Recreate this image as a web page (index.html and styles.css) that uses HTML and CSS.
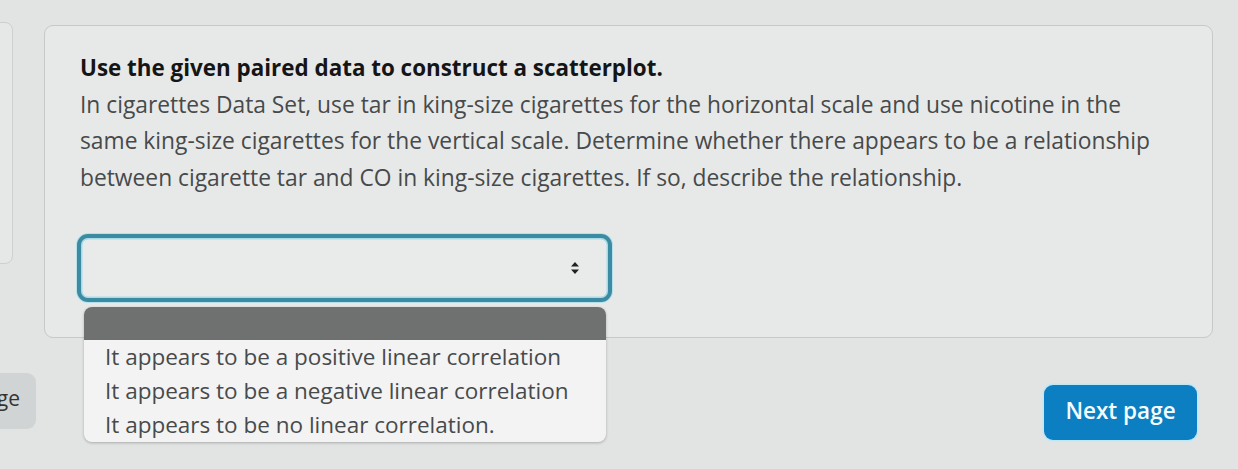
FILE: index.html
```html
<!DOCTYPE html>
<html lang="en">
<head>
<meta charset="utf-8">
<title>Scatterplot question</title>
<link rel="stylesheet" href="styles.css">
</head>
<body>
<div class="page">
  <aside class="side">
    <div class="side-panel"></div>
    <button class="side-btn" type="button">ge</button>
  </aside>
  <main class="main">
    <section class="card">
      <p class="title">Use the given paired data to construct a scatterplot.</p>
      <p class="body">In cigarettes Data Set, use tar in king-size cigarettes for the horizontal scale and use nicotine in the same king-size cigarettes for the vertical scale. Determine whether there appears to be a relationship between cigarette tar and CO in king-size cigarettes. If so, describe the relationship.</p>
      <div class="select-wrap">
        <div class="select">
          <svg class="arrows" width="10" height="14" viewBox="0 0 10 14"><path d="M5 1 L9 5.5 H1 Z M5 13 L9 8.5 H1 Z" fill="#222"/></svg>
        </div>
        <div class="menu">
          <div class="menu-head"></div>
          <ul class="options">
            <li>It appears to be a positive linear correlation</li>
            <li>It appears to be a negative linear correlation</li>
            <li>It appears to be no linear correlation.</li>
          </ul>
        </div>
      </div>
    </section>
    <div class="actions">
      <button class="next" type="button">Next page</button>
    </div>
  </main>
</div>
</body>
</html>
```
FILE: styles.css
```css
html, body {
  margin: 0;
  padding: 0;
}
body {
  background: #e2e4e3;
  font-family: "Open Sans", "Noto Sans", sans-serif;
  width: 1238px;
  height: 469px;
  overflow: hidden;
}
.page {
  display: flex;
  align-items: flex-start;
}
.side {
  width: 44px;
  flex: none;
  display: flex;
  flex-direction: column;
  overflow: hidden;
}
.side-panel {
  margin-top: 22px;
  margin-left: -20px;
  width: 31px;
  height: 240px;
  border: 1px solid #cdd0d0;
  border-radius: 8px;
  background: #e6e8e7;
}
.side-btn {
  margin-top: 109px;
  margin-left: -60px;
  width: 96px;
  height: 56px;
  border: none;
  border-radius: 9px;
  background: #d1d4d5;
  color: #333;
  font-family: inherit;
  font-size: 21px;
  text-align: right;
  padding: 0 16px 6px 0;
}
.main {
  width: 1169px;
  display: flex;
  flex-direction: column;
}
.card {
  margin-top: 25px;
  height: 313px;
  border: 1px solid #c6c9c9;
  border-radius: 9px;
  background: #e7e9e8;
  padding: 24px 52px 0 35px;
  box-sizing: border-box;
}
.title {
  margin: 0;
  font-size: 22.4px;
  line-height: 36.5px;
  font-weight: 700;
  color: #151515;
}
.body {
  margin: 0;
  font-size: 22.8px;
  line-height: 36.5px;
  color: #474a4b;
}
.select-wrap {
  position: relative;
  margin-top: 38px;
  margin-left: -3px;
  width: 535px;
}
.select {
  height: 68px;
  box-sizing: border-box;
  border: 4px solid #3b8ba2;
  border-radius: 11px;
  background: #e9ebea;
  box-shadow: inset 0 0 0 1.5px #a7dbe8, 0 0 0 1px #b6e0ea;
  display: flex;
  align-items: center;
  justify-content: flex-end;
  padding-right: 28px;
}
.menu {
  position: absolute;
  left: 7px;
  top: 73px;
  width: 522px;
  border-radius: 8px;
  overflow: hidden;
  background: #f3f3f3;
  box-shadow: 0 1px 3px rgba(0,0,0,0.25);
}
.menu-head {
  height: 33px;
  background: #6f7070;
}
.options {
  list-style: none;
  margin: 0;
  padding: 0 0 0 21px;
  font-size: 22.5px;
  line-height: 34px;
  color: #474a4b;
}
.options li {
  height: 34px;
}
.actions {
  display: flex;
  justify-content: flex-end;
  padding-right: 16px;
  margin-top: 47px;
}
.next {
  width: 153px;
  height: 55px;
  border: none;
  border-radius: 9px;
  background: #0b7fc2;
  box-shadow: 0 0 0 1.5px #bfe7f5;
  color: #f4fbff;
  font-family: inherit;
  font-size: 22.5px;
  font-weight: 600;
  padding: 0 0 4px 0;
}
```
